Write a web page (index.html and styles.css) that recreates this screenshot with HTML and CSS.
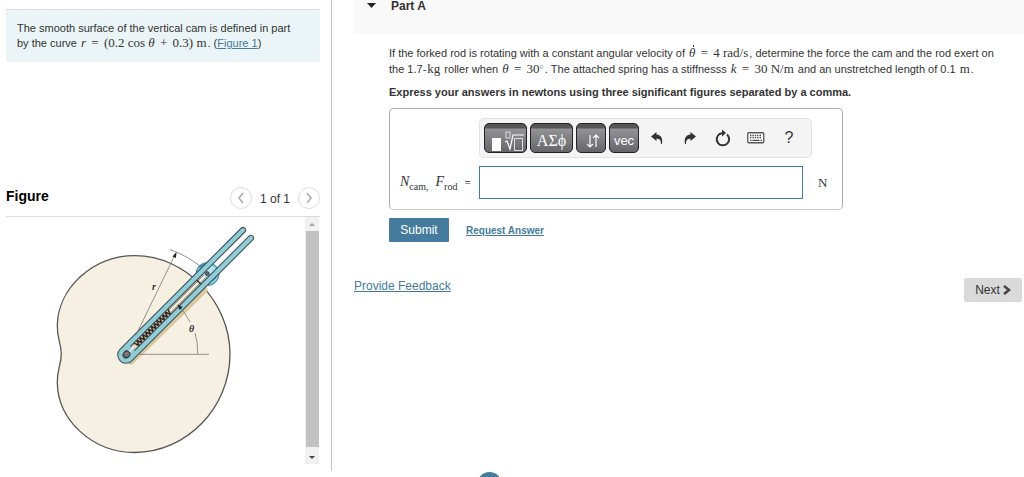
FILE: index.html
```html
<!DOCTYPE html>
<html lang="en">
<head>
    <meta charset="UTF-8">
    <meta name="viewport" content="width=device-width, initial-scale=1.0">
    <title>Part A</title>
    <link rel="stylesheet" href="styles.css">
</head>
<body>
    <div class="page">
        <aside class="left-pane">
            <div class="problem">The smooth surface of the vertical cam is defined in part by the curve <span class="math"><i>r</i> <span class="op">=</span> (0.2 cos <i>θ</i> <span class="op">+</span> 0.3) m</span>. (<a href="#figure">Figure 1</a>)</div>

            <div class="figure-header" id="figure">
                <h2>Figure</h2>
                <div class="pager">
                    <button class="round" aria-label="Previous figure">
                        <svg width="8" height="12" viewBox="0 0 8 12"><path d="M6 1 L2 6 L6 11"/></svg>
                    </button>
                    <span>1 of 1</span>
                    <button class="round" aria-label="Next figure">
                        <svg width="8" height="12" viewBox="0 0 8 12"><path d="M2 1 L6 6 L2 11"/></svg>
                    </button>
                </div>
            </div>

            <div class="figure-body">
                <svg class="cam" width="299" height="247" viewBox="6 217 299 247" preserveAspectRatio="xMinYMin">
                    <!-- cam -->
                    <path d="M135 255.7 C186 255.7 230 302 230 354 C230 408 186 452.5 135 452.5 C92 452.5 58 420 57.3 383 C57 368 61.3 365 61.3 354 C61.3 343 57 340 57.3 325 C58 289 92 255.7 135 255.7 Z" fill="#f6f0e3" stroke="#555" stroke-width="1.3"/>
                    <!-- shadow of the rod -->
                    <path d="M131 361 L204 290" stroke="#d8c7a0" stroke-width="7" stroke-linecap="round"/>
                    <!-- roller -->
                    <circle cx="207.5" cy="274" r="11.5" fill="#7fd0e6" stroke="#3c7f99" stroke-width="1"/>
                    <path d="M199 267 L206 264 M209 282 L216 277" stroke="#3d8cb8" stroke-width="2"/>
                    <!-- forked rod with the spring between its tines -->
                    <g transform="translate(126 355) rotate(-45)">
                        <path d="M2 -4 H103 V4 H2 Z" fill="#d5c5a0"/>
                        <path d="M103 -4 H124 V4 H103 Z" fill="#b5e6f2"/>
                        <path d="M62 0 H112" stroke="#807a6c" stroke-width="4"/>
                        <path d="M62 0 H112" stroke="#f3f0e6" stroke-width="2.4"/>
                        <path d="M103 -4 V4" stroke="#333" stroke-width="1.5"/>
                        <path d="M14 -3 l2 6 l2 -6 l2 6 l2 -6 l2 6 l2 -6 l2 6 l2 -6 l2 6 l2 -6 l2 6 l2 -6 l2 6 l2 -6 l2 6 l2 -6 l2 6 l2 -6 l2 6 l2 -6 l2 6 l2 -6 l2 6 l2 -6" fill="none" stroke="#2e2a26" stroke-width="1.5"/>
                        <path d="M171 -5.6 H0 A5.6 5.6 0 0 0 0 5.6 H171" fill="none" stroke="#3f5459" stroke-width="6.4" stroke-linecap="round"/>
                        <path d="M171 -5.6 H0 A5.6 5.6 0 0 0 0 5.6 H171" fill="none" stroke="#92ccd6" stroke-width="4.2" stroke-linecap="round"/>
                        <path d="M-2 -4 H9 V4 H-2 Z" fill="#92ccd6"/>
                        <path d="M1 0 H14" stroke="#e8f1f2" stroke-width="1.5"/>
                        <circle cx="1" cy="0" r="3.2" fill="#77777c" stroke="#333" stroke-width="1"/>
                        <circle cx="115" cy="0" r="2" fill="#666b7c" stroke="#333" stroke-width="0.8"/>
                    </g>
                    <!-- dimension lines -->
                    <g stroke="#777" stroke-width="0.8" fill="none">
                        <path d="M136 335 L176 252.7"/>
                        <path d="M170 249.7 Q184 254 200 266"/>
                        <path d="M137 354.3 H209"/>
                        <path d="M178 305 Q185 312 190 322 M195 333 Q198 343 197.7 354"/>
                    </g>
                    <path d="M176.5 252 L172.5 256.5 L176 258 Z M177.5 304.5 L182.5 307 L179.5 310 Z" fill="#222"/>
                    <text class="fig-label" x="152" y="290">r</text>
                    <text class="fig-label" x="189" y="332">θ</text>
                </svg>
                <div class="scrollbar">
                    <svg width="14" height="14" viewBox="0 0 14 14"><path d="M4 9 L7 6 L10 9 Z" fill="#a0a0a0"/></svg>
                    <div class="thumb"></div>
                    <svg width="14" height="14" viewBox="0 0 14 14"><path d="M4 6 L7 9 L10 6 Z" fill="#444"/></svg>
                </div>
            </div>
        </aside>

        <main class="right-pane">
            <header class="part-header">
                <svg width="9" height="5" viewBox="0 0 9 5"><path d="M0 0 H9 L4.5 5 Z" fill="#222"/></svg>
                <h2>Part A</h2>
            </header>

            <section class="part">
                <p class="question">If the forked rod is rotating with a constant angular velocity of <span class="math"><i class="dot">θ</i>&nbsp;<span class="op">=</span> 4 rad/s</span>, determine the force the cam and the rod exert on the 1.7-<span class="math">kg</span> roller when <span class="math"><i>θ</i> <span class="op">=</span> 30<span class="deg">○</span></span>. The attached spring has a stiffnesss <span class="math"><i>k</i> <span class="op">=</span> 30 N/m</span> and an unstretched length of 0.1 <span class="math">m</span>.</p>
                <p class="instructions">Express your answers in newtons using three significant figures separated by a comma.</p>

                <div class="answer-box">
                    <div class="toolbar">
                        <button class="key wide" aria-label="Templates">
                            <svg width="36" height="22" viewBox="0 0 36 22"><rect x="4" y="8" width="9" height="13" fill="#fff"/><path d="M17 12 L19 11 L22 19 L25 5 H36" fill="none" stroke="#fff" stroke-width="1.2"/><rect x="18" y="2" width="4" height="6" fill="none" stroke="#ddd"/><rect x="26.5" y="8.5" width="8" height="12" fill="none" stroke="#ddd"/></svg>
                        </button>
                        <button class="key wide greek">ΑΣϕ</button>
                        <button class="key" aria-label="Subscript and superscript">
                            <svg width="18" height="16" viewBox="-4 0 18 16" fill="none" stroke="#fff" stroke-width="1.2"><path d="M4 2 V14 M1 11 L4 14 L7 11 M10 14 V2 M7 5 L10 2 L13 5"/></svg>
                        </button>
                        <button class="key">vec</button>
                        <button class="tool" aria-label="Undo">
                            <svg width="14" height="14" viewBox="0 0 14 14"><path d="M1 5.5 L6.5 1 V3.5 C11 4 13 7 12 13 H11 C11 9 9.5 7.8 6.5 7.8 V10 Z" fill="#333"/></svg>
                        </button>
                        <button class="tool" aria-label="Redo">
                            <svg width="14" height="14" viewBox="0 0 14 14"><path d="M13 5.5 L7.5 1 V3.5 C3 4 1 7 2 13 H3 C3 9 4.5 7.8 7.5 7.8 V10 Z" fill="#333"/></svg>
                        </button>
                        <button class="tool" aria-label="Reset">
                            <svg width="16" height="18" viewBox="0 0 16 18"><path d="M12 5.5 A6.2 6.2 0 1 1 4.5 5 L8 4" fill="none" stroke="#333" stroke-width="2"/><path d="M7 0.5 L11 4 L7 7.5 Z" fill="#333"/></svg>
                        </button>
                        <button class="tool" aria-label="Keyboard">
                            <svg width="18" height="12" viewBox="0 0 18 12"><rect x="0.75" y="0.75" width="16" height="10" rx="1" fill="#fff" stroke="#555" stroke-width="1.3"/><path d="M3 3.5 H15 M3 5.7 H15" stroke="#444" stroke-width="1.3" stroke-dasharray="1.4 1"/><path d="M3 8.3 H15" stroke="#444" stroke-width="1.2" stroke-dasharray="1.5 1 7 1"/></svg>
                        </button>
                        <button class="tool help">?</button>
                    </div>
                    <label class="answer-label" for="answer"><span><i>N</i><sub>cam,</sub></span> <span><i>F</i><sub>rod</sub></span> <b>=</b></label>
                    <input class="answer" id="answer" type="text">
                    <span class="unit">N</span>
                </div>

                <div class="actions">
                    <button class="submit">Submit</button>
                    <a class="request" href="#">Request Answer</a>
                </div>
            </section>

            <div class="bottom-row">
                <a href="#">Provide Feedback</a>
                <button class="next">Next <svg width="8" height="10" viewBox="0 0 8 10"><path d="M1 1 L6 5 L1 9" fill="none" stroke="#444" stroke-width="2.5"/></svg></button>
            </div>

            <footer class="footer"><div class="logo"></div></footer>
        </main>
    </div>
</body>
</html>
```
FILE: styles.css
```css
* {
    box-sizing: border-box;
}
body {
    margin: 0;
    font-family: Arial, "Liberation Sans", sans-serif;
    font-size: 11px;
    color: #333;
    background: white;
}
a {
    color: #457b9d;
}
h2, p {
    margin: 0;
}
button {
    font-family: inherit;
    padding: 0;
    cursor: pointer;
}
svg {
    display: block;
}
.page {
    display: flex;
    height: 100vh;
    overflow: hidden;
}

/* left side */
.left-pane {
    flex: 0 0 332px;
    display: flex;
    flex-direction: column;
    margin-bottom: 6px;
    padding: 9px 11px 7px 6px;
    border-right: 1px solid #c0c6d2;
}
.problem {
    height: 53px;
    padding: 11px 20px 0 11px;
    background: #ebf5f7;
    border-top: 1px solid #dcdcdc;
    line-height: 15px;
}
.math {
    padding: 0 1px;
    font-family: "Liberation Serif", serif;
    font-size: 13px;
    line-height: 1;
    white-space: nowrap;
}
.op {
    margin: 0 2px;
}
.figure-header {
    display: flex;
    justify-content: space-between;
    align-items: center;
    margin-top: 122px;
    height: 33px;
    padding-bottom: 4px;
    border-bottom: 1px solid #dcdcdc;
}
.figure-header h2 {
    padding-bottom: 5px;
    font-size: 14px;
    color: black;
}
.pager {
    display: flex;
    align-items: center;
    gap: 8px;
    font-size: 12px;
}
.pager span {
    padding-top: 2px;
}
.round {
    display: flex;
    align-items: center;
    justify-content: center;
    width: 22px;
    height: 22px;
    background: white;
    border: 1px solid #ddd;
    border-radius: 50%;
}
.round path {
    fill: none;
    stroke: #aaa;
    stroke-width: 1.5;
}
.figure-body {
    flex: 1;
    display: flex;
    min-height: 0;
    padding-right: 1px;
}
.cam {
    flex: 1;
    min-width: 0;
}
.fig-label {
    font-family: "Liberation Serif", serif;
    font-size: 10px;
    font-style: italic;
    font-weight: bold;
    fill: #333;
}
.scrollbar {
    display: flex;
    flex-direction: column;
    width: 14px;
    background: #f1f1f1;
}
.thumb {
    flex: 1;
    margin: 0 0 3px 1px;
    background: #c1c1c1;
}

/* right side */
.right-pane {
    flex: 1;
    display: flex;
    flex-direction: column;
    padding-left: 22px;
}
.part-header {
    display: flex;
    align-items: flex-start;
    gap: 15px;
    height: 34px;
    padding-left: 13px;
    background: #f9f9f9;
}
.part-header svg {
    margin-top: 3px;
}
.part-header h2 {
    font-size: 12px;
    line-height: 13px;
}
.part {
    padding: 11px 0 0 35px;
}
.question {
    padding-right: 12px;
    line-height: 16px;
}
.dot {
    position: relative;
}
.dot::before {
    content: "";
    position: absolute;
    left: 4px;
    top: 0;
    width: 1px;
    height: 2px;
    background: #333;
}
.deg {
    font-size: 7px;
    vertical-align: 4px;
}
.instructions {
    margin-top: 7px;
    font-weight: bold;
    line-height: 16px;
}
.answer-box {
    display: grid;
    grid-template-columns: 80px 324px 1fr;
    row-gap: 8px;
    align-items: center;
    width: 454px;
    margin-top: 8px;
    padding: 9px 9px 10px 9px;
    border: 1px solid #aaa;
    border-bottom-color: #ccc;
    border-radius: 5px;
}
.toolbar {
    grid-column: 2 / 4;
    display: flex;
    align-items: center;
    width: 333px;
    height: 40px;
    padding: 0 4px;
    gap: 3px;
    background: #f4f4f4;
    border: 1px solid #e2e2e2;
    border-radius: 5px;
}
.key {
    display: flex;
    align-items: center;
    justify-content: center;
    width: 30px;
    height: 30px;
    padding-top: 5px;
    overflow: hidden;
    color: white;
    font-size: 13px;
    background: linear-gradient(#555 0, #555 4px, #929297 5px, #66666a 100%);
    border: 1px solid #222;
    border-radius: 5px;
}
.wide {
    width: 43px;
}
.greek {
    font-family: "Liberation Serif", serif;
    font-size: 16px;
}
.tool {
    display: flex;
    align-items: center;
    justify-content: center;
    width: 30px;
    height: 30px;
    color: #333;
    background: none;
    border: none;
}
.help {
    font-size: 16px;
}
.answer-label {
    display: flex;
    align-items: baseline;
    gap: 7px;
    padding-left: 1px;
    font-family: "Liberation Serif", serif;
    font-size: 14px;
    white-space: nowrap;
}
.answer-label sub {
    font-size: 10px;
    line-height: 1;
}
.answer-label b {
    font-size: 11px;
}
.answer {
    width: 100%;
    height: 33px;
    padding: 0 6px;
    border: 1px solid #457b9d;
}
.unit {
    padding-left: 15px;
    font-family: "Liberation Serif", serif;
    font-size: 13px;
}
.actions {
    display: flex;
    align-items: center;
    gap: 17px;
    margin-top: 8px;
}
.submit {
    width: 60px;
    height: 24px;
    color: white;
    font-size: 12px;
    background: #457b9d;
    border: none;
    border-radius: 1px;
}
.request {
    font-size: 10px;
    font-weight: bold;
}
.bottom-row {
    display: flex;
    justify-content: space-between;
    align-items: flex-start;
    margin-top: 36px;
    padding-right: 2px;
    font-size: 12px;
}
.bottom-row a {
    line-height: 17px;
}
.next {
    display: flex;
    align-items: center;
    justify-content: center;
    gap: 3px;
    width: 58px;
    height: 24px;
    color: #333;
    font-size: 12px;
    background: #d9d9d9;
    border: none;
    border-radius: 2px;
}
.footer {
    height: 5px;
    margin-top: auto;
    padding-left: 123px;
    overflow: hidden;
}
.logo {
    width: 25px;
    height: 25px;
    background: #457b9d;
    border-radius: 50%;
}
```
